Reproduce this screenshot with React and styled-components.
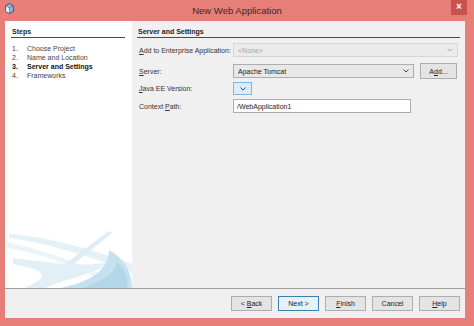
import * as React from 'react';
import styled, {createGlobalStyle} from 'styled-components';

const GlobalStyle = createGlobalStyle`
  html, body {
    margin: 0;
    padding: 0;
    background: #e67f78;
  }
  body {
    font-family: "Liberation Sans", Arial, sans-serif;
  }
`;

const Window = styled.div`
  width: 474px;
  height: 326px;
  background: #e67f78;
  display: flex;
  flex-direction: column;
  overflow: hidden;
`;

const TitleBar = styled.div`
  height: 21px;
  flex: none;
  display: grid;
  grid-template-columns: 1fr auto 1fr;
  align-items: start;
`;

const TitleIcon = styled.div`
  padding: 3px 0 0 5px;
  line-height: 0;
`;

const Title = styled.div`
  padding-top: 5px;
  font-size: 9.5px;
  line-height: 11px;
  color: #3a2624;
`;

const CloseButton = styled.div`
  justify-self: end;
  margin-right: 7px;
  width: 16px;
  height: 15px;
  background: #c9524d;
  color: #fff;
  font-size: 10px;
  line-height: 14px;
  text-align: center;
  font-weight: bold;
`;

const Body = styled.div`
  flex: 1;
  margin: 0 9px 8px 5px;
  background: #f0f0f0;
  display: flex;
  flex-direction: column;
`;

const Main = styled.div`
  flex: 1;
  display: flex;
  min-height: 0;
`;

const StepsPanel = styled.div`
  width: 127px;
  flex: none;
  background: #fff;
  display: flex;
  flex-direction: column;
`;

const SectionHeading = styled.div`
  margin: 6px ${(p) => p.$right}px 0 ${(p) => p.$left}px;
  padding: 0 0 1px 1px;
  border-bottom: 1px solid #4a4a4a;
  font-size: 7px;
  line-height: 9px;
  font-weight: bold;
  color: #1e1e1e;
`;

const StepList = styled.ol`
  list-style: none;
  margin: 6px 0 0 7px;
  padding: 0;
`;

const Step = styled.li`
  display: flex;
  font-size: 7px;
  line-height: 9px;
  color: ${(p) => (p.$current ? '#111' : '#444')};
  font-weight: ${(p) => (p.$current ? 'bold' : 'normal')};
`;

const StepNumber = styled.span`
  width: 15px;
`;

const Watermark = styled.svg`
  margin-top: auto;
  display: block;
`;

const SettingsPanel = styled.div`
  flex: 1;
  display: flex;
  flex-direction: column;
`;

const Form = styled.div`
  display: flex;
  flex-direction: column;
  padding: 0 7px 0 7px;
`;

const Row = styled.div`
  display: grid;
  grid-template-columns: 94px 1fr;
  align-items: center;
  height: ${(p) => p.$h}px;
  margin-top: ${(p) => p.$mt}px;
`;

const Label = styled.span`
  font-size: 7px;
  color: #333;
  white-space: nowrap;
`;

const Fields = styled.div`
  display: flex;
  align-items: center;
  gap: 6px;
`;

const Combo = styled.div`
  box-sizing: border-box;
  width: ${(p) => p.$w}px;
  height: 14px;
  display: flex;
  align-items: center;
  justify-content: space-between;
  padding: 0 4px 0 4px;
  border: 1px solid ${(p) => (p.$disabled ? '#d6d6d6' : '#adadad')};
  background: ${(p) => (p.$disabled ? '#ebebeb' : '#e8e8e8')};
  font-size: 7px;
  color: ${(p) => (p.$disabled ? '#a6a6a6' : '#222')};
`;

const SmallCombo = styled.div`
  box-sizing: border-box;
  width: 19px;
  height: 13px;
  display: flex;
  align-items: center;
  justify-content: center;
  border: 1px solid #7eb4ea;
  background: #dcecfc;
`;

const TextField = styled.div`
  box-sizing: border-box;
  width: 178px;
  height: 14px;
  display: flex;
  align-items: center;
  padding: 0 3px;
  border: 1px solid #abadb3;
  background: #fff;
  font-size: 7px;
  color: #222;
`;

const Button = styled.div`
  box-sizing: border-box;
  width: ${(p) => p.$w || 41}px;
  height: ${(p) => p.$h || 15}px;
  display: flex;
  align-items: center;
  justify-content: center;
  white-space: pre;
  border: 1px solid ${(p) => (p.$focused ? '#3c7fb1' : '#adadad')};
  background: ${(p) => (p.$focused ? '#e5f1fb' : '#e4e4e4')};
  font-size: 7px;
  color: #222;
`;

const ButtonBar = styled.div`
  height: 29px;
  flex: none;
  border-top: 1px solid #a0a0a0;
  display: flex;
  align-items: center;
  justify-content: flex-end;
  gap: 6px;
  padding-right: 5px;
`;

const U = styled.span`
  text-decoration: underline;
`;

const Chevron = ({color = '#555'}) => (
  <svg width="6" height="4" viewBox="0 0 6 4">
    <path d="M0.5 0.5 L3 3 L5.5 0.5" fill="none" stroke={color} strokeWidth="1" />
  </svg>
);

const AppIcon = () => (
  <svg width="9" height="11" viewBox="0 0 8 10">
    <path d="M4 0.5 L7.5 2.5 L7.5 7.5 L4 9.5 L0.5 7.5 L0.5 2.5 Z" fill="#8fbde6" stroke="#27496f" strokeWidth="0.8" />
    <path d="M0.8 2.7 L4 4.5 L4 9.2 L0.8 7.4 Z" fill="#e4f1fc" />
    <path d="M0.8 2.7 L4 4.5 L7.2 2.7 M4 4.5 L4 9.2" fill="none" stroke="#3f6a96" strokeWidth="0.6" />
  </svg>
);

const SwooshArt = () => (
  <Watermark width="127" height="60" viewBox="0 0 127 60">
    <path d="M4 6 C40 8 90 22 127 36 L127 44 C88 30 40 14 4 10 Z" fill="#e4f1f7" />
    <path d="M2 14 C40 22 80 36 112 56 L108 58 C76 40 38 26 2 20 Z" fill="#ebf5f9" />
    <path d="M30 60 C52 42 78 22 104 3 L107 5 C84 24 58 44 40 60 Z" fill="#dcedf5" />
    <path d="M8 30 C40 34 80 40 104 34 C96 44 70 48 40 60 L20 60 C40 50 50 44 8 36 Z" fill="#e1f0f7" />
    <path d="M56 60 C82 54 104 44 104 22 C118 30 127 42 127 60 Z" fill="#c3e1ee" />
    <path d="M78 60 C96 54 110 46 112 34 C120 42 124 50 122 60 Z" fill="#b1d7e8" />
  </Watermark>
);

const steps = ['Choose Project', 'Name and Location', 'Server and Settings', 'Frameworks'];

export default function App() {
  return (
    <>
      <GlobalStyle />
      <Window>
        <TitleBar>
          <TitleIcon>
            <AppIcon />
          </TitleIcon>
          <Title>New Web Application</Title>
          <CloseButton>×</CloseButton>
        </TitleBar>
        <Body>
          <Main>
            <StepsPanel>
              <SectionHeading $left={6} $right={7}>Steps</SectionHeading>
              <StepList>
                {steps.map((s, i) => (
                  <Step key={s} $current={i === 2}>
                    <StepNumber>{i + 1}.</StepNumber>
                    {s}
                  </Step>
                ))}
              </StepList>
              <SwooshArt />
            </StepsPanel>
            <SettingsPanel>
              <SectionHeading $left={5} $right={5}>Server and Settings</SectionHeading>
              <Form>
                <Row $h={14} $mt={5}>
                  <Label><U>A</U>dd to Enterprise Application:</Label>
                  <Fields>
                    <Combo $w={225} $disabled>
                      <span>&lt;None&gt;</span>
                      <Chevron color="#b0b0b0" />
                    </Combo>
                  </Fields>
                </Row>
                <Row $h={16} $mt={6}>
                  <Label><U>S</U>erver:</Label>
                  <Fields>
                    <Combo $w={181}>
                      <span>Apache Tomcat</span>
                      <Chevron color="#444" />
                    </Combo>
                    <Button $w={37} $h={16}>A<U>d</U>d...</Button>
                  </Fields>
                </Row>
                <Row $h={13} $mt={3}>
                  <Label><U>J</U>ava EE Version:</Label>
                  <Fields>
                    <SmallCombo>
                      <Chevron color="#1f4f86" />
                    </SmallCombo>
                  </Fields>
                </Row>
                <Row $h={14} $mt={4}>
                  <Label>Context <U>P</U>ath:</Label>
                  <Fields>
                    <TextField>/WebApplication1</TextField>
                  </Fields>
                </Row>
              </Form>
            </SettingsPanel>
          </Main>
          <ButtonBar>
            <Button>{'< '}<U>B</U>ack</Button>
            <Button $focused>{'Next >'}</Button>
            <Button><U>F</U>inish</Button>
            <Button>Cancel</Button>
            <Button><U>H</U>elp</Button>
          </ButtonBar>
        </Body>
      </Window>
    </>
  );
}
